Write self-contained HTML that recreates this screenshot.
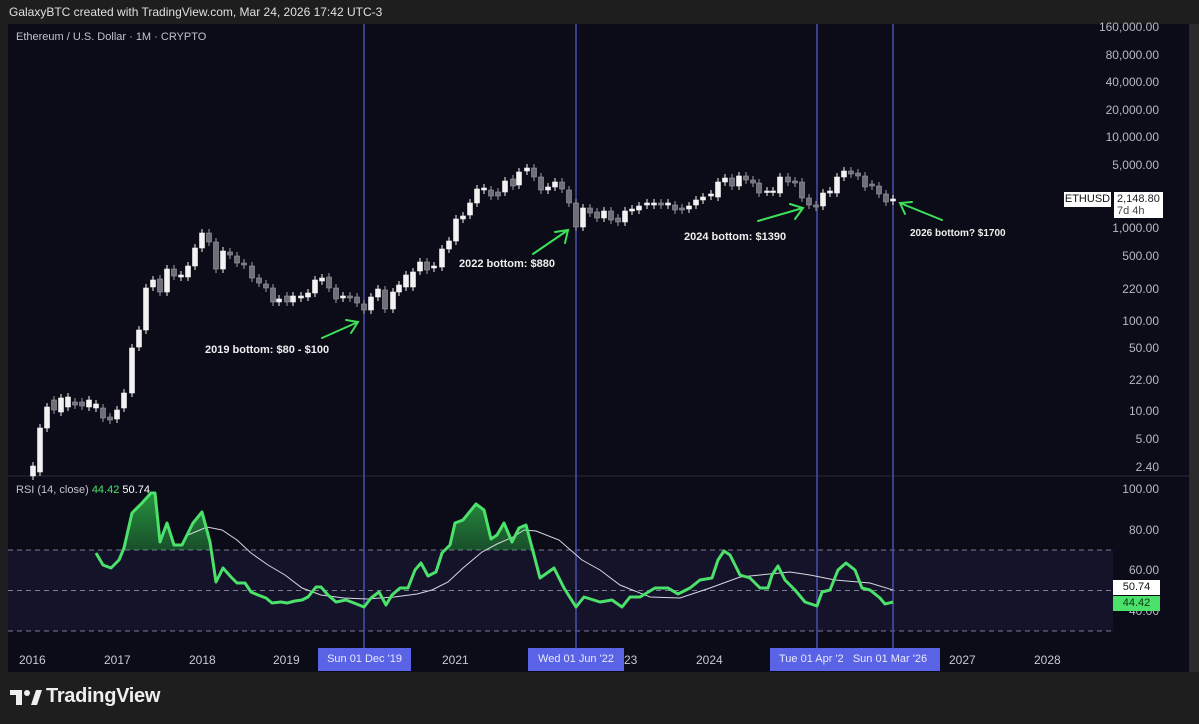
<!DOCTYPE html><html><head><meta charset="utf-8"><style>
*{margin:0;padding:0;box-sizing:border-box}
body{width:1199px;height:724px;background:#1e1e1e;overflow:hidden;font-family:"Liberation Sans",sans-serif;position:relative}
.t{position:absolute;white-space:nowrap}
</style></head><body>
<div class="t" style="left:9px;top:5px;font-size:12px;color:#e0e0e0">GalaxyBTC created with TradingView.com, Mar 24, 2026 17:42 UTC-3</div>
<div style="position:absolute;left:8px;top:24px;width:1181px;height:648px;background:#0b0c18"></div>
<div style="position:absolute;left:1189px;top:24px;width:10px;height:648px;background:#2b2b2b"></div>
<svg id="s" width="1199" height="724" style="position:absolute;left:0;top:0">
<defs>
<linearGradient id="g" x1="0" y1="0" x2="0" y2="1"><stop offset="0" stop-color="#2fbf4a" stop-opacity=".75"/><stop offset="1" stop-color="#2fbf4a" stop-opacity="0"/></linearGradient>
<clipPath id="c"><rect x="0" y="480" width="1199" height="70"/></clipPath>
</defs>
<rect x="8" y="550" width="1105" height="81" fill="#14132a"/>
<line x1="8" y1="476" x2="1189" y2="476" fill="none" stroke="#2a2c40"/>
<g stroke="#7a7d92" stroke-dasharray="5,4"><line x1="8" y1="550" x2="1113" y2="550"/><line x1="8" y1="590.5" x2="1113" y2="590.5"/><line x1="8" y1="631" x2="1113" y2="631"/></g>
<g stroke="#4a4fb0" stroke-width="1.5"><line x1="364" y1="24" x2="364" y2="648"/><line x1="576" y1="24" x2="576" y2="648"/><line x1="817" y1="24" x2="817" y2="648"/><line x1="893" y1="24" x2="893" y2="648"/></g>
<g id="cd"></g>
<g id="rsi"></g>
<g stroke="#3ee05a" stroke-width="2" fill="none" stroke-linecap="round">
<path d="M322 338L358 322M346 320L358 322L351 333"/>
<path d="M533 254L568 230M555 232L568 230L565 243"/>
<path d="M758 221L803 208M790 204L803 208L795 219"/>
<path d="M942 220L900 203M912 202L900 203L905 214"/>
</g>
<g fill="#eeeeee">
<path d="M10 690H22V705H16V695H10Z"/>
<circle cx="27" cy="693" r="3"/>
<path d="M31 705L36 690H42L37 705Z"/>
</g>
</svg>
<div class="t" style="left:16px;top:31px;font-size:11px;color:#c0c2cc">Ethereum / U.S. Dollar · 1M · CRYPTO</div>
<div class="t" style="left:16px;top:484px;font-size:11px;color:#c0c2cc">RSI (14, close) <span style="color:#4be16a">44.42</span> <span style="color:#fff">50.74</span></div>
<div class="t" style="left:205px;top:344px;font-size:11px;font-weight:bold;color:#eee">2019 bottom: $80 - $100</div>
<div class="t" style="left:459px;top:258px;font-size:11px;font-weight:bold;color:#eee">2022 bottom: $880</div>
<div class="t" style="left:684px;top:231px;font-size:11px;font-weight:bold;color:#eee">2024 bottom: $1390</div>
<div class="t" style="left:910px;top:228px;font-size:10px;font-weight:bold;color:#eee">2026 bottom? $1700</div>
<div id="ax"></div>
<div class="t" style="left:1064px;top:192px;width:47px;height:15px;background:#fff;color:#111;font-size:11px;text-align:center;line-height:15px">ETHUSD</div>
<div class="t" style="left:1114px;top:192px;width:49px;height:26px;background:#fff;color:#222;font-size:11px;line-height:12px;padding:1px 0 0 3px">2,148.80<br><span style="color:#444">7d 4h</span></div>
<div class="t" style="left:1113px;top:580px;width:47px;height:15px;background:#fff;color:#111;font-size:11px;text-align:center;line-height:15px">50.74</div>
<div class="t" style="left:1113px;top:596px;width:47px;height:15px;background:#4be16a;color:#0a3a12;font-size:11px;text-align:center;line-height:15px">44.42</div>
<div class="t" style="left:318px;top:648px;width:93px;height:23px;background:#5a62e6;color:#e8eaff;font-size:11px;text-align:center;line-height:23px">Sun 01 Dec '19</div>
<div class="t" style="left:528px;top:648px;width:96px;height:23px;background:#5a62e6;color:#e8eaff;font-size:11px;text-align:center;line-height:23px">Wed 01 Jun '22</div>
<div class="t" style="left:770px;top:648px;width:170px;height:23px;background:#5a62e6;color:#e8eaff;font-size:11px;line-height:23px;padding-left:9px">Tue 01 Apr '2 &nbsp; Sun 01 Mar '26</div>
<div class="t" style="left:46px;top:685px;font-size:20px;font-weight:bold;color:#eee;letter-spacing:-0.3px">TradingView</div>
<script>
var ns="http://www.w3.org/2000/svg";
function el(p,n,a){var e=document.createElementNS(ns,n);for(var k in a)e.setAttribute(k,a[k]);p.appendChild(e);return e}
var C=[[33,466,476,1],[40,428,472,1],[47,407,428,1],[54,400,410,0],[61,398,412,1],[68,397,407,1],[75,402,405,0],[82,402,406,0],[89,400,407,1],[96,404,408,1],[103,408,418,0],[110,417,420,0],[117,410,419,1],[124,393,408,1],[132,348,393,1],[139,330,347,1],[146,288,330,1],[153,280,287,1],[160,279,292,0],[167,269,292,1],[174,269,276,0],[181,275,277,1],[188,266,277,1],[195,248,266,1],[202,233,248,1],[209,233,242,0],[216,242,269,0],[223,251,269,1],[230,252,255,0],[237,256,263,0],[244,263,265,0],[252,266,278,0],[259,278,283,0],[266,284,288,0],[273,288,302,0],[279,299,302,1],[287,296,302,0],[293,296,302,1],[301,296,298,1],[308,293,297,1],[315,280,293,1],[322,278,281,1],[329,277,288,0],[336,288,299,0],[343,296,298,1],[350,296,298,0],[357,297,303,0],[364,304,310,0],[371,297,310,1],[378,289,297,1],[385,290,309,0],[393,292,309,1],[399,285,292,1],[406,275,287,1],[413,272,287,1],[420,262,271,1],[427,262,270,0],[434,266,268,1],[442,249,267,1],[449,241,249,1],[456,219,241,1],[463,216,219,1],[470,203,215,1],[477,189,203,1],[484,188,190,1],[491,190,196,0],[498,192,196,0],[505,181,192,1],[513,179,186,0],[519,172,185,1],[527,168,171,1],[534,168,177,0],[541,177,190,0],[548,187,190,1],[555,182,187,1],[562,182,189,0],[569,190,203,0],[576,203,227,0],[583,208,227,1],[590,208,213,0],[597,212,218,0],[604,211,218,1],[611,211,220,0],[618,218,222,0],[625,211,222,1],[632,209,211,1],[639,206,210,1],[647,203,205,1],[654,203,205,1],[661,203,205,0],[668,203,205,1],[675,205,210,0],[682,208,210,0],[689,206,209,1],[696,200,205,1],[703,197,200,1],[711,194,196,1],[718,182,197,1],[725,178,182,1],[732,178,186,0],[739,176,186,1],[746,176,180,0],[753,180,183,0],[759,183,193,0],[767,191,192,1],[773,191,192,1],[780,177,193,1],[788,177,182,0],[795,181,183,0],[802,182,198,0],[809,198,205,0],[816,205,207,0],[823,193,206,1],[830,191,193,1],[837,177,193,1],[844,171,177,1],[851,171,174,0],[858,173,176,0],[865,176,187,0],[872,184,186,0],[879,186,194,0],[886,194,202,0],[893,199,201,1]];
var g=document.getElementById("cd");
C.forEach(function(c){var col=c[3]?"#f2f2f2":"#6e6f78";var st=c[3]?"#f2f2f2":"#9a9ba3";
el(g,"line",{x1:c[0],x2:c[0],y1:c[1]-4,y2:c[2]+4,stroke:st,"stroke-width":1});
el(g,"rect",{x:c[0]-2.5,y:c[1],width:5,height:Math.max(1.5,c[2]-c[1]),fill:col,stroke:st,"stroke-width":.6});});
var R="96,553 103,565 111,568 119,560 124,548 132,513 142,503 151,493 155,493 160,542 167,523 174,545 182,545 193,523 202,512 210,542 216,582 223,568 231,577 237,583 245,583 251,592 258,595 266,598 272,603 281,602 287,603 295,601 302,600 308,597 316,587 321,587 328,595 336,602 346,600 354,603 364,607 371,598 379,592 386,605 392,595 400,588 408,588 415,570 421,563 428,576 436,572 442,553 450,545 455,523 463,520 476,504 484,510 491,539 497,535 504,523 512,542 519,528 526,525 534,555 540,578 554,568 564,588 576,607 584,597 600,602 612,600 622,607 630,597 640,597 655,588 668,588 678,594 690,588 700,580 712,578 718,560 724,551 730,555 740,575 750,578 760,588 768,588 772,575 778,566 785,580 795,590 805,602 817,606 822,592 830,590 838,570 846,563 855,570 862,588 870,590 880,598 885,604 893,602";
var M="188,535 207,527 222,530 237,540 251,553 268,565 285,575 302,588 321,595 344,598 367,599 394,597 417,594 432,590 448,582 463,568 482,552 497,544 513,537 524,530 536,531 559,540 582,560 600,570 620,585 650,597 680,598 710,588 740,577 760,575 790,572 810,575 835,580 870,583 893,590";
var r=document.getElementById("rsi");
el(r,"polygon",{points:"96,550 "+R+" 893,550",fill:"url(#g)","clip-path":"url(#c)"});
el(r,"polyline",{points:M,fill:"none",stroke:"#d8d8e0","stroke-width":1});
el(r,"polyline",{points:R,fill:"none",stroke:"#4be16a","stroke-width":3,"stroke-linejoin":"round"});
var ax=document.getElementById("ax"),h="";
[["160,000.00",27],["80,000.00",55],["40,000.00",82],["20,000.00",110],["10,000.00",137],["5,000.00",165],["1,000.00",228],["500.00",256],["220.00",289],["100.00",321],["50.00",348],["22.00",380],["10.00",411],["5.00",439],["2.40",467],["100.00",489],["80.00",530],["60.00",570],["40.00",611]].forEach(function(a){h+='<div class="t" style="right:40px;top:'+(a[1]-7)+'px;font-size:12px;color:#b6b8c2">'+a[0]+'</div>'});
[["2016",33],["2017",118],["2018",203],["2019",287],["2021",456],["2024",710],["2027",963],["2028",1048]].forEach(function(a){h+='<div class="t" style="left:'+(a[1]-14)+'px;top:653px;font-size:12px;color:#c6c8d2">'+a[0]+'</div>'});
h+='<div class="t" style="left:624px;top:653px;font-size:12px;color:#c6c8d2">23</div>';
ax.innerHTML=h;
</script>
</body></html>
